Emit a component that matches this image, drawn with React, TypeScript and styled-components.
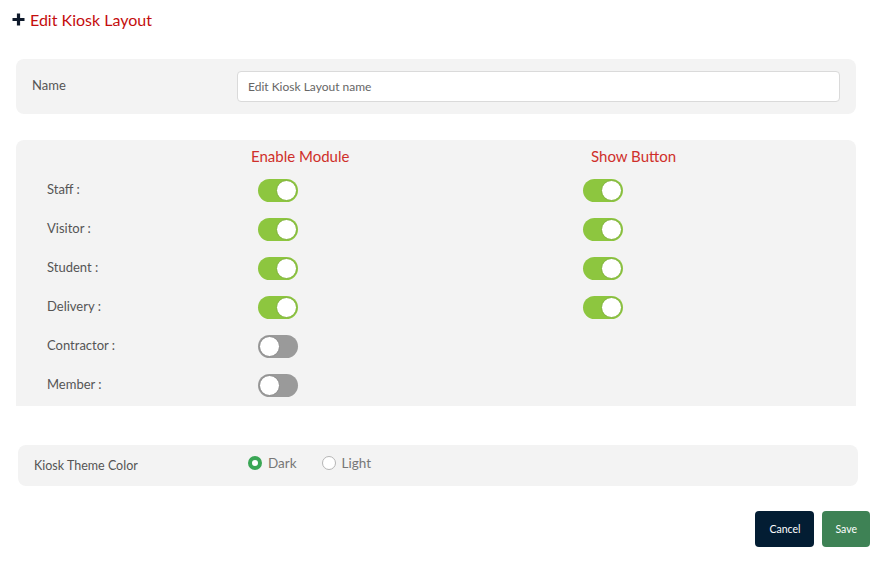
import React, { FC } from 'react';
import styled, { createGlobalStyle } from 'styled-components';

const GlobalStyle = createGlobalStyle`
  body {
    margin: 0;
    background: #fff;
    font-family: Lato, "Open Sans", sans-serif;
  }
`;

const Page = styled.div`
  display: flex;
  flex-direction: column;
  padding: 8px 18px 0 12px;
  width: 888px;
  box-sizing: border-box;
`;

const Title = styled.h1`
  display: flex;
  align-items: center;
  gap: 5px;
  margin: 0;
  height: 22px;
  font-size: 16px;
  font-weight: 400;
  color: #c40d0d;
`;

const Card = styled.div<{ $indent: number; $top: number }>`
  width: 840px;
  margin-left: ${({ $indent }) => $indent}px;
  margin-top: ${({ $top }) => $top}px;
  background: #f3f3f3;
  border-radius: 8px;
  box-sizing: border-box;
`;

const NameRow = styled.div`
  display: grid;
  grid-template-columns: 205px 1fr;
  align-items: center;
  padding: 12px 16px 12px 16px;
`;

const FieldLabel = styled.label`
  font-size: 13px;
  color: #555;
  margin-bottom: 4px;
`;

const TextInput = styled.input`
  height: 31px;
  box-sizing: border-box;
  border: 1px solid #dadada;
  border-radius: 4px;
  background: #fff;
  padding: 0 10px;
  font-family: inherit;
  font-size: 12px;
  color: #333;
  &::placeholder {
    color: #666;
  }
`;

const ModuleCard = styled(Card)`
  border-radius: 8px 8px 0 0;
  padding: 8px 0 0 31px;
`;

const ModuleGrid = styled.div`
  display: grid;
  grid-template-columns: 211px 325px 1fr;
  grid-auto-rows: 39px;
  grid-template-rows: 24px;
  align-items: center;
`;

const ColHeader = styled.div<{ $shift: number }>`
  margin-left: ${({ $shift }) => $shift}px;
  font-size: 15px;
  color: #cf2f2a;
  align-self: start;
  margin-top: -1px;
`;

const RowLabel = styled.div`
  font-size: 13px;
  color: #555;
  margin-bottom: 6px;
`;

const ToggleTrack = styled.span<{ $on: boolean }>`
  position: relative;
  display: inline-block;
  width: 40px;
  height: 23px;
  border-radius: 12px;
  background: ${({ $on }) => ($on ? '#8dc63f' : '#9a9a9a')};
`;

const ToggleKnob = styled.span<{ $on: boolean }>`
  position: absolute;
  top: 1px;
  left: ${({ $on }) => ($on ? '18px' : '1px')};
  width: 21px;
  height: 21px;
  box-sizing: border-box;
  border-radius: 50%;
  background: #fff;
  border: 1px solid ${({ $on }) => ($on ? '#7fb23a' : '#8a8a8a')};
`;

const ThemeRow = styled.div`
  display: flex;
  align-items: center;
  height: 41px;
  padding-left: 16px;
`;

const ThemeLabel = styled.div`
  width: 214px;
  font-size: 12.5px;
  color: #555;
`;

const RadioOption = styled.label`
  display: flex;
  align-items: center;
  gap: 6px;
  margin-right: 25px;
  font-size: 13.5px;
  color: #777;
  margin-top: -6px;
`;

const RadioDot = styled.span<{ $checked: boolean }>`
  display: inline-block;
  width: 14px;
  height: 14px;
  box-sizing: border-box;
  border-radius: 50%;
  background: #fff;
  border: ${({ $checked }) => ($checked ? '4px solid #3aa655' : '1px solid #b5b5b5')};
`;

const Actions = styled.div`
  display: flex;
  justify-content: flex-end;
  gap: 8px;
  margin-top: 25px;
`;

const Button = styled.button<{ $variant: 'dark' | 'green' }>`
  height: 36px;
  padding: 0 ${({ $variant }) => ($variant === 'dark' ? '14px' : '13px')};
  border: none;
  border-radius: 4px;
  font-family: inherit;
  font-size: 10.5px;
  color: #fff;
  background: ${({ $variant }) => ($variant === 'dark' ? '#031d33' : '#3e8255')};
`;

const Toggle: FC<{ on: boolean }> = ({ on }) => (
  <ToggleTrack $on={on}>
    <ToggleKnob $on={on} />
  </ToggleTrack>
);

const PlusIcon = () => (
  <svg width="13" height="13" viewBox="0 0 13 13">
    <path d="M6.5 0.5v12M0.5 6.5h12" stroke="#0f1a2b" strokeWidth="3.2" />
  </svg>
);

const modules = [
  { name: 'Staff', enabled: true, button: true },
  { name: 'Visitor', enabled: true, button: true },
  { name: 'Student', enabled: true, button: true },
  { name: 'Delivery', enabled: true, button: true },
  { name: 'Contractor', enabled: false, button: null },
  { name: 'Member', enabled: false, button: null },
];

const App: FC = () => (
  <Page>
    <GlobalStyle />
    <Title>
      <PlusIcon />
      Edit Kiosk Layout
    </Title>

    <Card $indent={4} $top={29}>
      <NameRow>
        <FieldLabel>Name</FieldLabel>
        <TextInput placeholder="Edit Kiosk Layout name" />
      </NameRow>
    </Card>

    <ModuleCard $indent={4} $top={26}>
      <ModuleGrid>
        <span />
        <ColHeader $shift={-7}>Enable Module</ColHeader>
        <ColHeader $shift={8}>Show Button</ColHeader>
        {modules.map((m) => (
          <React.Fragment key={m.name}>
            <RowLabel>{m.name} :</RowLabel>
            <div>
              <Toggle on={m.enabled} />
            </div>
            <div>{m.button !== null && <Toggle on={m.button} />}</div>
          </React.Fragment>
        ))}
      </ModuleGrid>
    </ModuleCard>

    <Card $indent={6} $top={39}>
      <ThemeRow>
        <ThemeLabel>Kiosk Theme Color</ThemeLabel>
        <RadioOption>
          <RadioDot $checked />
          Dark
        </RadioOption>
        <RadioOption>
          <RadioDot $checked={false} />
          Light
        </RadioOption>
      </ThemeRow>
    </Card>

    <Actions>
      <Button $variant="dark">Cancel</Button>
      <Button $variant="green">Save</Button>
    </Actions>
  </Page>
);

export default App;
